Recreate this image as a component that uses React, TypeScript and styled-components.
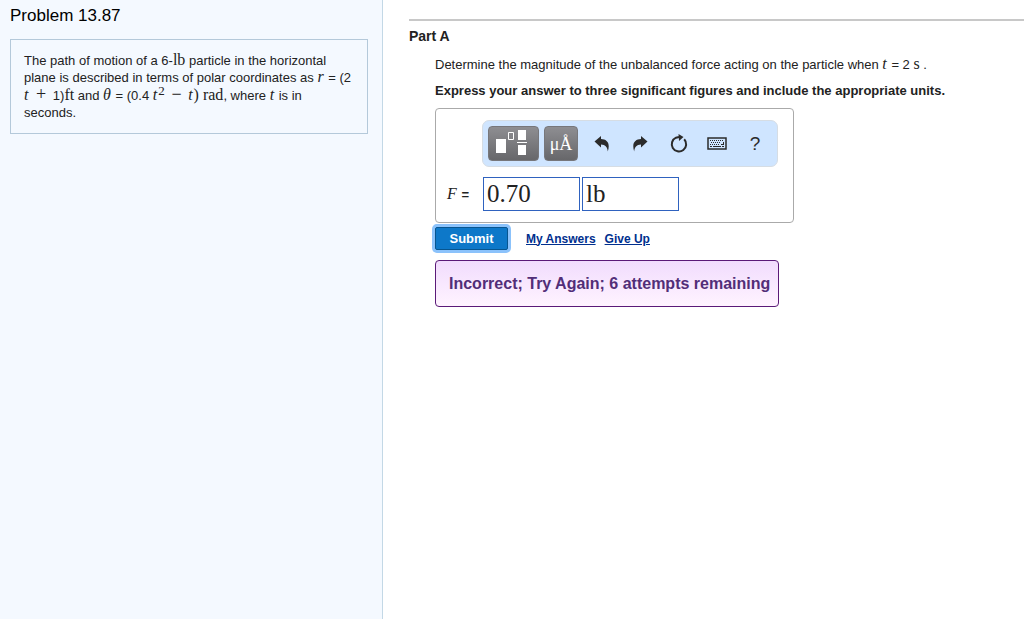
import React from "react";
import styled, { createGlobalStyle } from "styled-components";

const Global = createGlobalStyle`
  * { box-sizing: border-box; }
  body { margin: 0; background: #fff; color: #222; font: 13px/16px "Liberation Sans", Arial, sans-serif; }
`;

const Page = styled.div`
  display: grid;
  grid-template-columns: 383px minmax(0, 1fr);
  min-height: 100vh;
`;

const Sidebar = styled.aside`
  background: #f4f9ff;
  border-right: 1px solid #c3d8e6;
  padding: 6px 14px 10px 10px;
`;

const Title = styled.h1`
  margin: 0 0 13px;
  font-size: 17px;
  line-height: 20px;
  font-weight: normal;
  color: #000;
`;

const Statement = styled.section`
  border: 1px solid #b4c9da;
  padding: 12px 13px;
`;

const Paragraph = styled.p`
  margin: 0;
  line-height: 17px;
`;

const Roman = styled.span`
  font-family: "Liberation Serif", "Times New Roman", serif;
  font-size: 16px;
  line-height: 16px;
`;

const Variable = styled.i`
  margin-right: 1px;
  font-family: "Liberation Serif", "Times New Roman", serif;
  font-size: 16px;
  line-height: 16px;
`;

const Operator = styled(Roman)`
  margin: 0 3px;
  font-size: 18px;
`;

const Power = styled.sup`
  font-family: "Liberation Serif", "Times New Roman", serif;
  font-size: 13px;
  line-height: 0;
`;

const Main = styled.main`
  padding: 19px 0 20px 26px;
`;

const Part = styled.section`
  border-top: 2px solid #c8c8c8;
`;

const PartTitle = styled.h2`
  margin: 7px 0 12px;
  font-size: 14px;
  line-height: 16px;
`;

const PartBody = styled.div`
  padding-left: 26px;
`;

const Question = styled.p`
  margin: 0 0 10px;
`;

const Instruction = styled.p`
  margin: 0 0 9px;
  font-weight: bold;
`;

const AnswerBox = styled.div`
  width: 359px;
  max-width: 100%;
  border: 1px solid #aaa;
  border-radius: 4px;
  padding: 11px 15px 11px 11px;
`;

const Toolbar = styled.div`
  display: flex;
  align-items: center;
  gap: 5px;
  height: 47px;
  margin: 0 0 10px 35px;
  padding: 0 5px;
  background: #cfe5ff;
  border: 1px solid #d6dde4;
  border-radius: 7px;
`;

const PaletteButton = styled.button<{ $wide?: boolean }>`
  flex: none;
  display: flex;
  align-items: center;
  justify-content: center;
  width: ${(p) => (p.$wide ? 51 : 34)}px;
  height: 35px;
  padding: 0;
  border: 1px solid #77777b;
  border-radius: 4px;
  background: linear-gradient(#8e8e92, #67676a);
  color: #fff;
  font: 18px/24px "Liberation Serif", "Times New Roman", serif;
`;

const Tools = styled.div`
  flex: 1;
  display: flex;
  justify-content: space-between;
  padding: 0 5px 0 7px;
`;

const ToolButton = styled.button`
  display: flex;
  align-items: center;
  justify-content: center;
  width: 24px;
  height: 24px;
  padding: 0;
  border: 0;
  background: none;
  color: #2b2b2b;
  font: 19px/24px "Liberation Sans", Arial, sans-serif;
`;

const Entry = styled.div`
  display: flex;
  align-items: center;
  gap: 2px;
`;

const EntryLabel = styled.label`
  width: 34px;
  font-weight: bold;
`;

const LabelVariable = styled(Variable)`
  font-weight: normal;
`;

const Field = styled.input`
  width: 97px;
  height: 34px;
  padding: 0 3px;
  border: 1px solid #2f62bf;
  border-radius: 0;
  background: #fff;
  color: #222;
  font: 25px/30px "Liberation Serif", "Times New Roman", serif;
`;

const Actions = styled.div`
  display: flex;
  align-items: center;
  margin: 4px 0 10px;
`;

const Submit = styled.button`
  width: 73px;
  height: 23px;
  margin-right: 18px;
  padding: 0;
  border: 1px solid #07558f;
  border-radius: 2px;
  background: #0d78c9;
  box-shadow: 0 0 0 3px #8bc2fb;
  color: #fff;
  font: bold 13px/16px "Liberation Sans", Arial, sans-serif;
`;

const ActionLink = styled.a`
  margin-right: 9px;
  color: #002f8e;
  font-size: 12px;
  font-weight: bold;
`;

const Feedback = styled.div`
  width: 344px;
  max-width: 100%;
  padding: 13px 4px 12px 13px;
  border: 1px solid #5b1a78;
  border-radius: 4px;
  background: linear-gradient(#f1dcfd, #fff3ff);
  color: #522e78;
  font-size: 16px;
  line-height: 20px;
  font-weight: bold;
`;

const TemplateIcon = () => (
  <svg width="49" height="33" viewBox="0 0 49 33" fill="#fff" aria-hidden="true">
    <path d="M7 12h10v14H7zM29 3h8v10h-8zM29 18h8v10h-8zM28 15h10v1H28z" />
    <path d="M19.500 5.500h5v7h-5z" fill="none" stroke="#fff" />
  </svg>
);

const UndoIcon = () => (
  <svg width="16" height="16" viewBox="0 0 16 16" fill="currentColor" aria-hidden="true">
    <path d="M.5 5.500 7 0v3c6 .2 9.500 4 6.800 12.500C13.500 11.500 11.500 8.700 7 8.500V11.500z" />
  </svg>
);

const RedoIcon = () => (
  <svg width="16" height="16" viewBox="0 0 16 16" fill="currentColor" aria-hidden="true">
    <path d="M15.500 5.500 9 0v3C3 3.200-.5 7 2.200 15.500 2.500 11.500 4.500 8.700 9 8.500V11.500z" />
  </svg>
);

const ResetIcon = () => (
  <svg width="18" height="20" viewBox="0 0 18 20" aria-hidden="true">
    <path d="M14.200 5.300A7.200 7.200 0 1 1 6 3.700L9 3" fill="none" stroke="currentColor" strokeWidth="2" />
    <path d="M8.500 0l5 3-4.500 4z" fill="currentColor" />
  </svg>
);

const KeyboardIcon = () => (
  <svg width="20" height="13" viewBox="0 0 20 13" fill="none" stroke="currentColor" aria-hidden="true">
    <path d="M1 1h18v11H1z" strokeWidth="1.500" />
    <path d="M3 3.500h14M4 5.500h10M3 7.500h10" strokeDasharray="1 1" />
    <path d="M16.500 5v3M14 7.500h3M3 9.500h2M6 9.500h8M15 9.500h2" />
  </svg>
);

export default function App() {
  return (
    <>
      <Global />
      <Page>
        <Sidebar>
          <Title>Problem 13.87</Title>
          <Statement>
            <Paragraph>
              The path of motion of a 6-<Roman>lb</Roman> particle in the horizontal plane is described in terms of
              polar coordinates as <Variable>r</Variable> = (2 <Variable>t</Variable> <Operator>+</Operator> 1)
              <Roman>ft</Roman> and <Variable>θ</Variable> = (0.4 <Variable>t</Variable>
              <Power>2</Power> <Operator>−</Operator> <Variable>t</Variable>
              <Roman>) rad</Roman>, where <Variable>t</Variable> is in seconds.
            </Paragraph>
          </Statement>
        </Sidebar>
        <Main>
          <Part>
            <PartTitle>Part A</PartTitle>
            <PartBody>
              <Question>
                Determine the magnitude of the unbalanced force acting on the particle when <Variable>t</Variable> = 2{" "}
                <Roman>s</Roman> .
              </Question>
              <Instruction>
                Express your answer to three significant figures and include the appropriate units.
              </Instruction>
              <AnswerBox>
                <Toolbar role="toolbar" aria-label="Answer tools">
                  <PaletteButton $wide type="button" aria-label="Templates">
                    <TemplateIcon />
                  </PaletteButton>
                  <PaletteButton type="button">μÅ</PaletteButton>
                  <Tools>
                    <ToolButton type="button" aria-label="Undo"><UndoIcon /></ToolButton>
                    <ToolButton type="button" aria-label="Redo"><RedoIcon /></ToolButton>
                    <ToolButton type="button" aria-label="Reset"><ResetIcon /></ToolButton>
                    <ToolButton type="button" aria-label="Keyboard shortcuts"><KeyboardIcon /></ToolButton>
                    <ToolButton type="button">?</ToolButton>
                  </Tools>
                </Toolbar>
                <Entry>
                  <EntryLabel htmlFor="value">
                    <LabelVariable>F</LabelVariable> =
                  </EntryLabel>
                  <Field id="value" defaultValue="0.70" />
                  <Field aria-label="Units" defaultValue="lb" />
                </Entry>
              </AnswerBox>
              <Actions>
                <Submit type="button">Submit</Submit>
                <ActionLink href="#answers">My Answers</ActionLink>
                <ActionLink href="#give-up">Give Up</ActionLink>
              </Actions>
              <Feedback role="status">Incorrect; Try Again; 6 attempts remaining</Feedback>
            </PartBody>
          </Part>
        </Main>
      </Page>
    </>
  );
}
